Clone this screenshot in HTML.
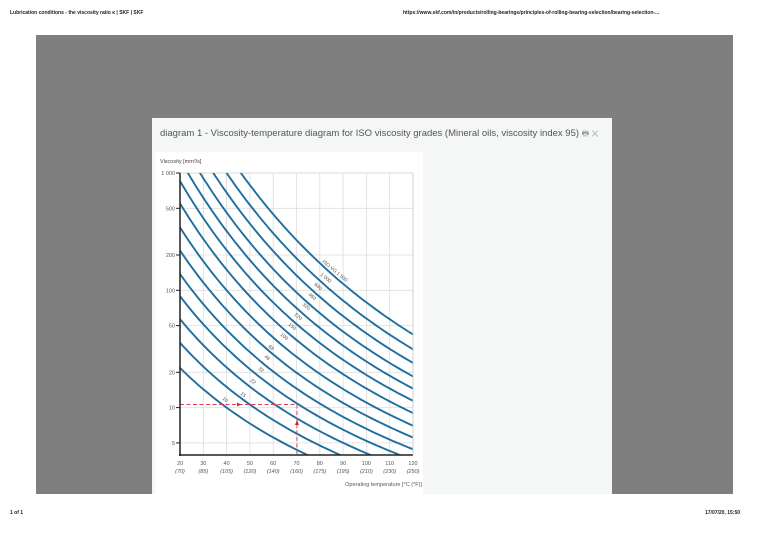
<!DOCTYPE html>
<html><head><meta charset="utf-8"><style>
body{margin:0;width:768px;height:543px;background:#fff;position:relative;overflow:hidden;font-family:"Liberation Sans",sans-serif}
.t{position:absolute;font-size:5px;font-weight:bold;color:#222;white-space:nowrap}
#gray{position:absolute;left:36px;top:35px;width:697px;height:459px;background:#7f7f7f}
#dlg{position:absolute;left:152px;top:118px;width:460px;height:376px;background:#f5f6f6}
#title{position:absolute;left:8px;top:10px;font-size:9.5px;color:#555;white-space:nowrap}
svg{position:absolute;left:0;top:0}
</style></head><body>
<div class="t" style="left:10px;top:10px">Lubrication conditions - the viscosity ratio κ | SKF | SKF</div>
<div class="t" style="left:403px;top:10px">https://www.skf.com/in/products/rolling-bearings/principles-of-rolling-bearing-selection/bearing-selection-...</div>
<div class="t" style="left:10px;top:510px">1 of 1</div>
<div class="t" style="left:705px;top:510px">17/07/20, 15:50</div>
<div id="gray"></div>
<div id="dlg"><div id="title">diagram 1 - Viscosity-temperature diagram for ISO viscosity grades (Mineral oils, viscosity index 95) <span style="font-size:8px;color:#999">🖶 ✕</span></div></div>
<svg id="s" width="768" height="543" font-family="Liberation Sans, sans-serif"></svg>
<script>
var s=document.getElementById('s'),h='';
h+='<rect x="155" y="152" width="268" height="342" fill="#fff"/>';
h+='<text x="160" y="163" font-size="5.5" fill="#444">Viscosity [mm²/s]</text>';
function Y(v){return 173+(3-Math.log10(v))*117.3}
function X(t){return 180+(t-20)*2.33}
for(var t=30;t<=120;t+=10)h+='<line x1="'+X(t)+'" y1="173" x2="'+X(t)+'" y2="455" stroke="#ddd" stroke-width="0.8"/>';
[500,200,100,50,20,10,5].forEach(function(v){h+='<line x1="180" y1="'+Y(v)+'" x2="413" y2="'+Y(v)+'" stroke="#ddd" stroke-width="0.8"/>';});
h+='<line x1="180" y1="173" x2="413" y2="173" stroke="#ccc" stroke-width="0.8"/>';
h+='<clipPath id="c"><rect x="180" y="173" width="233" height="282"/></clipPath><g clip-path="url(#c)">';
var G=[10,15,22,32,46,68,100,150,220,320,460,680,1000,1500];
G.forEach(function(g){var lg=Math.log10(g),B=4.13-(lg-1)*(1.2/2.176),W=Math.log10(Math.log10(g+0.7)),p='';
for(var t=18;t<=122;t+=2){var w=W-B*(Math.log10(t+273.15)-Math.log10(313.15));var v=Math.pow(10,Math.pow(10,w))-0.7;var y=Y(Math.max(v,0.5));p+=(p?'L':'M')+X(t).toFixed(1)+' '+y.toFixed(1);}
h+='<path d="'+p+'" fill="none" stroke="#1f6e9f" stroke-width="1.9"/>';});
h+='</g>';
h+='<path d="M180 404.5H297V455" fill="none" stroke="#e0405a" stroke-width="0.9" stroke-dasharray="4,2.5"/>';
h+='<path d="M237 402.5L241 404.5L237 406.5Z M295 425L297 420L299 425Z" fill="#d0203a"/>';
h+='<line x1="180" y1="173" x2="180" y2="456" stroke="#222" stroke-width="1.5"/><line x1="179" y1="455" x2="413" y2="455" stroke="#222" stroke-width="1.5"/><line x1="413" y1="173" x2="413" y2="455" stroke="#ccc" stroke-width="0.8"/>';
[[1000,'1 000'],[500,'500'],[200,'200'],[100,'100'],[50,'50'],[20,'20'],[10,'10'],[5,'5']].forEach(function(a){var y=Y(a[0]);h+='<text x="175" y="'+(y+2)+'" font-size="5.5" fill="#555" text-anchor="end">'+a[1]+'</text><line x1="176" y1="'+y+'" x2="180" y2="'+y+'" stroke="#222"/>';});
var F=[70,85,105,120,140,160,175,195,210,230,250];
for(var i=0;i<11;i++){var t=20+i*10,x=X(t);h+='<text x="'+x+'" y="465" font-size="5.5" fill="#555" text-anchor="middle">'+t+'</text><text x="'+x+'" y="473" font-size="5.5" fill="#555" text-anchor="middle" font-style="italic">('+F[i]+')</text>';}
h+='<text x="422" y="486" font-size="5.5" fill="#555" text-anchor="end">Operating temperature [°C (°F)]</text>';
var L=[[222,399,'10'],[240,394,'15'],[250,381,'22'],[258,369,'32'],[264,357,'46'],[268,347,'68'],[280,335,'100'],[288,325,'150'],[294,315,'220'],[302,305,'320'],[308,295,'460'],[314,285,'680'],[320,275,'1 000'],[322,262,'ISO VG 1 500']];
L.forEach(function(a){h+='<text x="'+a[0]+'" y="'+a[1]+'" font-size="5" fill="#555" transform="rotate(40 '+a[0]+' '+a[1]+')">'+a[2]+'</text>';});
s.innerHTML=h;
</script>
</body></html>
